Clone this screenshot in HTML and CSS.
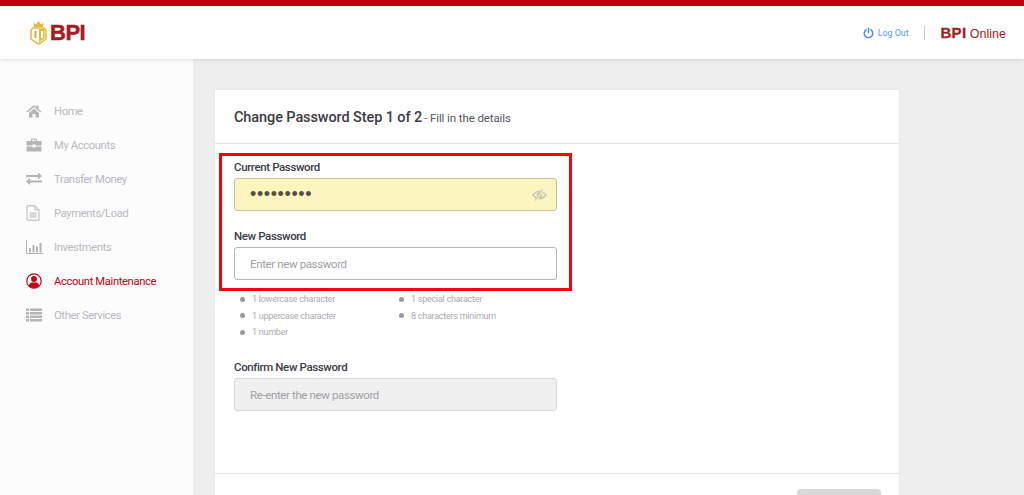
FILE: index.html
```html
<!DOCTYPE html>
<html lang="en">
<head>
    <meta charset="UTF-8">
    <title>BPI Online - Change Password</title>
    <link rel="stylesheet" href="styles.css">
</head>
<body>
    <header class="topbar">
        <div class="brand">
            <svg class="crest" width="17" height="25" viewBox="0 0 17 25">
                <path d="M4 7 L3.500 2.500 L6 4.500 L8.500 1 L11 4.500 L13.500 2.500 L13 7 Z" fill="#e2bb3c"/>
                <path d="M3 8 H14 L16 10 V19 L8.500 24 L1 19 V10 Z" fill="#fff" stroke="#e2bb3c" stroke-width="1.500"/>
                <path d="M9 9 H14.500 V18.500 L9 22 Z" fill="#e2bb3c"/>
                <rect x="4.500" y="11" width="2" height="7" fill="#d9ae33"/>
                <rect x="11" y="11" width="2" height="7" fill="#fff"/>
            </svg>
            <span class="brand-name">BPI</span>
        </div>
        <div class="topbar-right">
            <a class="logout" href="#">
                <svg width="11" height="12" viewBox="0 0 11 12" fill="none" stroke="#4a90e2" stroke-width="1.500" stroke-linecap="round">
                    <path d="M3 2.800 A4.300 4.300 0 1 0 8 2.800"/>
                    <path d="M5.500 1 V5.500"/>
                </svg>
                Log Out
            </a>
            <span class="divider"></span>
            <span class="online"><b>BPI</b> Online</span>
        </div>
    </header>

    <div class="layout">
        <nav class="sidebar">
            <a class="nav-item" href="#">
                <svg width="16" height="14" viewBox="0 0 16 14" fill="#b5b5b5"><path d="M8 1 L0.500 7.500 L1.500 8.500 L8 3 L14.500 8.500 L15.500 7.500 L12.500 5 V1.500 H10.500 V3.200 Z"/><path d="M3 9 L8 4.500 L13 9 V13.500 H9.500 V10 H6.500 V13.500 H3 Z"/></svg>
                Home
            </a>
            <a class="nav-item" href="#">
                <svg width="16" height="14" viewBox="0 0 16 14" fill="#b5b5b5"><path d="M5 3 V1.500 Q5 0.500 6 0.500 H10 Q11 0.500 11 1.500 V3 H9.800 V1.700 H6.200 V3 Z"/><path d="M0.500 3 H15.500 V7.500 H9.500 V6.500 H6.500 V7.500 H0.500 Z"/><path d="M0.500 8.500 H6.500 V9.500 H9.500 V8.500 H15.500 V13.500 H0.500 Z"/></svg>
                My Accounts
            </a>
            <a class="nav-item" href="#">
                <svg width="16" height="12" viewBox="0 0 16 12" fill="#b5b5b5"><path d="M0 2.500 H12 V0 L16 3.500 L12 7 V4.500 H0 Z" transform="translate(0 -0.500)"/><path d="M16 7.500 H4 V5 L0 8.500 L4 12 V9.500 H16 Z"/></svg>
                Transfer Money
            </a>
            <a class="nav-item" href="#">
                <svg width="14" height="16" viewBox="0 0 14 16" fill="none" stroke="#b5b5b5"><path d="M1 0.800 H9 L13 4.800 V15.200 H1 Z"/><path d="M9 0.800 V4.800 H13"/><path d="M3.500 8 H10.500 M3.500 10 H10.500 M3.500 12 H10.500"/></svg>
                Payments/Load
            </a>
            <a class="nav-item" href="#">
                <svg width="17" height="14" viewBox="0 0 17 14" fill="#b5b5b5"><path d="M0.500 0 V13.500 H17" fill="none" stroke="#b5b5b5"/><rect x="3" y="8" width="2" height="4.500"/><rect x="6.500" y="5" width="2" height="7.500"/><rect x="10" y="6.500" width="2" height="6"/><rect x="13.500" y="3" width="2" height="9.500"/></svg>
                Investments
            </a>
            <a class="nav-item active" href="#">
                <svg width="16" height="16" viewBox="0 0 16 16"><circle cx="8" cy="8" r="7.200" fill="none" stroke="#c30012" stroke-width="1.200"/><circle cx="8" cy="6" r="2.900" fill="#c30012"/><path d="M2.800 13 Q3.500 9.500 6 9.500 H10 Q12.500 9.500 13.200 13 Q8 17 2.800 13 Z" fill="#c30012"/></svg>
                Account Maintenance
            </a>
            <a class="nav-item" href="#">
                <svg width="16" height="14" viewBox="0 0 16 14" fill="#b5b5b5"><rect y="0.500" width="3" height="2.500"/><rect x="4" y="0.500" width="12" height="2.500"/><rect y="4" width="3" height="2.500"/><rect x="4" y="4" width="12" height="2.500"/><rect y="7.500" width="3" height="2.500"/><rect x="4" y="7.500" width="12" height="2.500"/><rect y="11" width="3" height="2.500"/><rect x="4" y="11" width="12" height="2.500"/></svg>
                Other Services
            </a>
        </nav>

        <main class="content">
            <section class="card">
                <div class="card-head">
                    <h1>Change Password Step 1 of 2</h1>
                    <span class="subtitle">- Fill in the details</span>
                </div>
                <form class="card-body">
                    <div class="annotation"></div>

                    <label class="label">Current Password</label>
                    <div class="field filled">
                        <span class="dots">&#8226;&#8226;&#8226;&#8226;&#8226;&#8226;&#8226;&#8226;&#8226;</span>
                        <svg width="15" height="12" viewBox="0 0 15 12" fill="none" stroke="#c4c4b4" stroke-width="1.200">
                            <path d="M0.800 6 Q7.500 -1.500 14.200 6 Q7.500 13.500 0.800 6 Z"/>
                            <circle cx="7.500" cy="6" r="2.300" fill="#c4c4b4"/>
                            <path d="M3.500 11.500 L11 0.500" stroke="#fdf5c0" stroke-width="2.400"/>
                            <path d="M3 11.500 L10.500 0.500"/>
                        </svg>
                    </div>

                    <label class="label">New Password</label>
                    <div class="field">Enter new password</div>

                    <ul class="hints">
                        <li>1 lowercase character</li>
                        <li>1 special character</li>
                        <li>1 uppercase character</li>
                        <li>8 characters minimum</li>
                        <li>1 number</li>
                    </ul>

                    <label class="label">Confirm New Password</label>
                    <div class="field disabled">Re-enter the new password</div>
                </form>
                <div class="card-foot">
                    <button class="next" type="button"></button>
                </div>
            </section>
        </main>
    </div>
</body>
</html>
```

FILE: styles.css
```css
* {
    box-sizing: border-box;
}

html, body {
    height: 100%;
}

body {
    margin: 0;
    background-color: #eeeeee;
    color: #3c3c46;
    font-family: "Roboto", sans-serif;
    font-size: 11.500px;
    letter-spacing: -0.38px;
    overflow: hidden; /* page is cut at the window edge */
}

.topbar {
    display: flex;
    align-items: center;
    justify-content: space-between;
    height: 59px;
    padding: 0 18px 0 30px;
    background-color: #ffffff;
    border-top: 6px solid #c00010;
    box-shadow: 0 1px 4px rgba(0, 0, 0, 0.12);
    position: relative;
    z-index: 1;
}

.brand {
    display: flex;
    align-items: center;
    gap: 3px;
}

.brand-name {
    color: #a51c24;
    font-family: "Liberation Sans", sans-serif;
    font-size: 22px;
    font-weight: 700;
    letter-spacing: -0.5px;
    -webkit-text-stroke: 0.5px #a51c24;
}

.topbar-right {
    display: flex;
    align-items: center;
}

.logout {
    display: flex;
    align-items: center;
    gap: 4px;
    color: #5b9be6;
    font-size: 9px;
    letter-spacing: -0.1px;
    text-decoration: none;
}

.divider {
    width: 1px;
    height: 14px;
    margin: 0 15px 0 16px;
    background-color: #cccccc;
}

.online {
    color: #a51c24;
    font-family: "Liberation Sans", sans-serif;
    font-size: 12.500px;
    letter-spacing: 0;
}

.online b {
    font-size: 15px;
    letter-spacing: 0.3px;
    -webkit-text-stroke: 0.3px #a51c24;
}

.layout {
    display: flex;
    height: calc(100% - 59px);
}

.sidebar {
    flex: 0 0 193px;
    display: flex;
    flex-direction: column;
    gap: 14px;
    padding: 42px 0 0 26px;
    background-color: #fcfcfc;
}

.nav-item {
    display: flex;
    align-items: center;
    height: 20px;
    color: #b9b9be;
    font-size: 11.200px;
    letter-spacing: -0.35px;
    text-decoration: none;
    position: relative;
    padding-left: 28px;
}

.nav-item svg {
    position: absolute;
    left: 0;
    top: 50%;
    transform: translateY(-50%);
}

.nav-item.active {
    color: #c30012;
}

.content {
    flex: 1;
    padding: 31px 125px 0 22px;
}

.card {
    background-color: #ffffff;
    box-shadow: 0 0 2px rgba(0, 0, 0, 0.08);
}

.card-head {
    display: flex;
    align-items: baseline;
    gap: 2px;
    height: 54px;
    padding: 19px 19px 0;
    border-bottom: 1px solid #e3e3e3;
}

.card-head h1 {
    margin: 0;
    font-size: 14.500px;
    font-weight: 500;
    letter-spacing: -0.1px;
    color: #3c3c46;
}

.subtitle {
    font-size: 11.500px;
    letter-spacing: -0.1px;
    color: #55555f;
}

.card-body {
    height: 330px;
    padding: 15px 19px 0;
    border-bottom: 1px solid #e3e3e3;
    position: relative;
}

.annotation {
    position: absolute;
    left: 4px;
    top: 9px;
    width: 353px;
    height: 138px;
    border: 3px solid #ff0000;
}

.label {
    display: block;
    height: 19px;
    line-height: 17px;
    font-weight: 500;
    color: #3c3c46;
}

.field {
    display: flex;
    align-items: center;
    justify-content: space-between;
    width: 323px;
    height: 33px;
    margin-bottom: 17px;
    padding: 0 9px 0 15px;
    border: 1px solid #b5b5b5;
    border-radius: 3px;
    color: #a0a0a5;
}

.field.filled {
    background-color: #fdf5c0;
    border-color: #cfc194;
}

.field.disabled {
    background-color: #f0f0f0;
    border-color: #d9d9d9;
    margin-bottom: 0;
}

.dots {
    color: #55503c;
    font-family: "Liberation Sans", sans-serif;
    font-size: 18px;
    letter-spacing: 0.600px;
}

.hints {
    display: grid;
    grid-template-columns: 159px 1fr;
    grid-auto-rows: 16.500px;
    width: 323px;
    height: 68px;
    margin: -6px 0 0;
    padding: 0 0 0 6px;
    list-style: none;
    color: #aaaaae;
    font-size: 9px;
    letter-spacing: -0.25px;
}

.hints li {
    display: flex;
    align-items: center;
    gap: 7px;
}

.hints li:before {
    content: "";
    width: 5px;
    height: 5px;
    border-radius: 50%;
    background-color: #999999;
}

.card-foot {
    display: flex;
    justify-content: flex-end;
    height: 80px;
    padding: 15px 18px 0 0;
}

.next {
    width: 84px;
    height: 40px;
    border: none;
    border-radius: 4px;
    background-color: #d8d8d8;
}
```
